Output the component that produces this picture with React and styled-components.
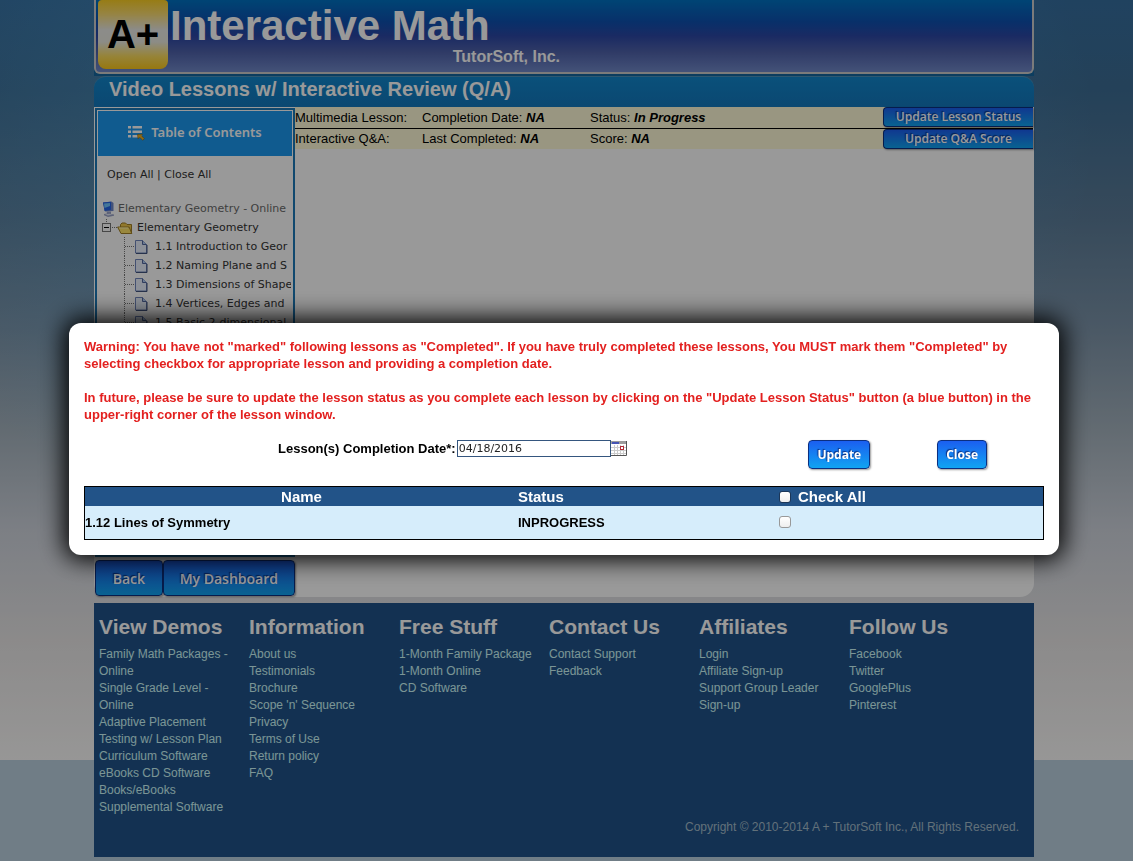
import React from 'react';
import styled, { createGlobalStyle } from 'styled-components';

const GlobalStyle = createGlobalStyle
`
  * {
    box-sizing: border-box;
  }
  html {
    background: #bbd0df;
  }
  body {
    margin: 0;
    font-family: "Liberation Sans", Arial, sans-serif;
    color: #000;
  }
  a {
    color: inherit;
    text-decoration: none;
  }
  ul {
    list-style: none;
    margin: 0;
    padding: 0;
  }
`

const Page = styled.div
`
  min-height: 100vh;
  padding: 0 5px 4px 0;
  background:
    radial-gradient(ellipse 620px 460px at 42% 130px, rgba(90, 190, 245, 0.5), rgba(90, 190, 245, 0)) no-repeat 0 0 / 100% 760px,
    linear-gradient(#366e9f 0, #3d6d94 90px, #5c7c98 220px, #7d94a9 330px, #a5b3be 430px, #cfd4dd 530px, #e9e7e7 640px, #fcfbfa 760px) no-repeat 0 0 / 100% 760px,
    #bbd0df;
`
const Wrap = styled.div
`
  width: 100%;
  max-width: 940px;
  margin: 0 auto;
`
const Top = styled.div
`
  background: #14679f;
  padding-bottom: 2px;
`
const Banner = styled.header
`
  display: flex;
  height: 74px;
  padding-left: 2px;
  border: 2px solid #cecece;
  border-top: none;
  border-radius: 0 0 6px 6px;
  background: linear-gradient(#0072c2 0, #0e50b0 22px, #2c47a5 36px, #4f62aa 52px, #7189c9 72px);
`
const Logo = styled.div
`
  width: 70px;
  height: 69px;
  border-radius: 4px 4px 8px 8px;
  background: linear-gradient(#fccf24 0, #fbdc70 14px, #e9e9e5 30px, #e9e9e0 42px, #fbdc60 56px, #fcc81c 69px);
  text-align: center;
  font-size: 40px;
  font-weight: bold;
  line-height: 69px;
`
const Brand = styled.div
`
  padding: 3px 0 0 2px;
  width: 394px;
  color: #fff;
  font-weight: bold;
`
const BrandName = styled.h1
`
  margin: 0;
  font-size: 42px;
  line-height: 46px;
  white-space: nowrap;
`
const Company = styled.p
`
  margin: 0;
  padding-right: 2px;
  font-size: 16px;
  line-height: 16px;
  text-align: right;
`
const TitleBar = styled.h2
`
  margin: 0;
  height: 31px;
  padding-left: 15px;
  border-top: 1px solid #4c93bd;
  border-radius: 12px 12px 0 0;
  background: linear-gradient(#1186cc, #1378bd);
  color: #fff;
  font-size: 20px;
  line-height: 24px;
`
const Content = styled.div
`
  display: flex;
  min-height: 490px;
  padding: 1px;
  border-radius: 0 0 14px 14px;
  background: #fff;
`
const Side = styled.aside
`
  flex: 0 0 200px;
  min-width: 0;
`
const TocPanel = styled.div
`
  height: 449px;
  border: 2px solid #1b79b8;
  overflow: hidden;
`
const TocHead = styled.div
`
  display: flex;
  align-items: center;
  justify-content: center;
  gap: 6px;
  height: 45px;
  margin: 1px 0 0 1px;
  padding-bottom: 3px;
  border-right: 1px solid #fff;
  background: #1c98ef;
  color: #fff;
  font-family: "Noto Sans", "Open Sans", sans-serif;
  font-size: 13px;
  font-weight: 600;
`
const Tree = styled.nav
`
  margin: 0 2px 0 1px;
  padding: 9px 0 0 4px;
  overflow: hidden;
  color: #333;
  font-family: "DejaVu Sans", Verdana, sans-serif;
  font-size: 11px;
  line-height: 19px;
  white-space: nowrap;
`
const TreeTools = styled.div
`
  margin: 0 0 15px 5px;
`
const TreeRow = styled.div
`
  display: flex;
  align-items: center;
  height: 19px;
  color: ${props => props.$muted ? '#6a6a6a' : '#333'};
  svg{
    flex: none;
    margin-right: ${props => props.$gap}px;
  }
`
const Leaves = styled.ul
`
  padding-left: 22px;
`
const Main = styled.main
`
  flex: 1;
  min-width: 0;
`
const StatusTable = styled.table
`
  width: 100%;
  margin-top: -1px;
  border-collapse: collapse;
  table-layout: fixed;
  font-size: 13px;
  tr{
    height: 21px;
  }
  tr + tr td{
    border-top: 1px solid #000;
  }
  td{
    padding: 0;
    background: #fffbd8;
    white-space: nowrap;
  }
`
const Col = styled.col
`
  width: ${props => props.$w};
`
const BlueButton = styled.button
`
  padding: 0;
  border: 1px solid #0b2f80;
  border-radius: 4px;
  background: linear-gradient(#1b5ff0, #10a4f2);
  box-shadow: 1px 1px 2px rgba(0, 0, 0, 0.4);
  color: #fff;
  font-family: "Open Sans", "Noto Sans", sans-serif;
  font-weight: 600;
  text-shadow: -1px -1px 1px #0b2f80;
`
const RowButton = styled(BlueButton)
`
  display: block;
  width: 100%;
  height: 20px;
  border-right: none;
  border-radius: 4px 0 0 4px;
  font-size: 12px;
  line-height: 18px;
`
const SideButtons = styled.div
`
  display: flex;
  margin-top: 3px;
`
const BigButton = styled(BlueButton)
`
  flex: ${props => props.$grow} 0 0;
  height: 36px;
  font-size: 14px;
`
const SmallButton = styled(BlueButton)
`
  height: 29px;
  padding: 0 8px;
  font-size: 12px;
  font-weight: bold;
`
const Footer = styled.footer
`
  min-height: 254px;
  margin-top: 6px;
  padding: 12px 15px 0 5px;
  background: #215389;
`
const FooterCols = styled.div
`
  display: grid;
  grid-template-columns: repeat(6, 150px);
  min-height: 204px;
`
const FooterCol = styled.div
`
  padding-right: 15px;
  color: #cdf8f8;
  font-size: 12px;
  line-height: 17px;
  h3{
    margin: 0 0 8px;
    color: #fff;
    font-size: 21px;
    line-height: 23px;
    white-space: nowrap;
  }
  li a{
    display: block;
  }
`
const Copyright = styled.p
`
  margin: 0;
  color: #a4bccb;
  font-size: 12px;
  line-height: 17px;
  text-align: right;
`
const Overlay = styled.div
`
  position: fixed;
  inset: 0;
  display: flex;
  align-items: center;
  justify-content: center;
  padding: 17px 5px 0 0;
  background: rgba(0, 0, 0, 0.4);
`
const Dialog = styled.section
`
  width: 100%;
  max-width: 990px;
  padding: 15px;
  border-radius: 12px;
  background: #fff;
  box-shadow: 0 0 25px 5px #000;
  font-size: 13px;
  font-weight: bold;
`
const Warning = styled.p
`
  margin: 0 0 17px;
  color: #e3201f;
  line-height: 17px;
`
const DateForm = styled.div
`
  display: flex;
  align-items: flex-start;
  padding: 0 57px 17px 194px;
  label{
    margin-right: 1px;
    line-height: 17px;
  }
`
const DateInput = styled.input
`
  width: 154px;
  height: 17px;
  padding: 0 1px;
  border: 1px solid #35567f;
  border-radius: 0;
  font-family: "DejaVu Sans", Verdana, sans-serif;
  font-size: 11px;
  color: #222;
`
const IconButton = styled.button
`
  margin-top: 1px;
  padding: 0;
  border: none;
  background: none;
  line-height: 0;
`
const Actions = styled.div
`
  display: flex;
  gap: 67px;
  margin-left: auto;
`
const LessonTable = styled.table
`
  width: 100%;
  border: 1px solid #000;
  border-spacing: 0;
  table-layout: fixed;
  th, td{
    padding: 0;
    text-align: left;
  }
  th{
    height: 19px;
    background: #225388;
    color: #fff;
    font-size: 15px;
    line-height: 18px;
  }
  th:first-child{
    text-align: center;
  }
  td{
    height: 33px;
    background: #d6edfb;
  }
`
const Check = styled.input
`
  appearance: none;
  width: 12px;
  height: 12px;
  margin: 0 7px 0 0;
  border: 1px solid ${props => props.$dark ? '#1b3658' : '#999'};
  border-radius: 3px;
  background: linear-gradient(#fff, #eee);
  vertical-align: -1px;
`

const ListIcon = () => (
  <svg width="17" height="17" viewBox="0 0 17 17" aria-hidden="true">
    <path d="M0 2h3v2.500H0zM4.500 2H14v2.500H4.500zM0 6.500h3V9H0zM4.500 6.500H14V9H4.500zM0 11h3v2.500H0zM4.500 11H14v2.500H4.500z" fill="#fff" />
    <path d="M9.500 10.500l5-.5-1.200 1.500 3 3.200-1.600 1.600-3.100-3.100-1.500 1.600z" fill="#f2b31e" stroke="#80601a" strokeWidth=".6" />
  </svg>
)

const ComputerIcon = () => (
  <svg width="13" height="16" viewBox="0 0 13 16" aria-hidden="true">
    <path d="M1 1.500L9.500.5 11.500 2v8L3 10.500z" fill="#6f87cc" />
    <path d="M1 1.500l8-.8v8L2.500 10z" fill="#2564e8" />
    <path d="M2 2.500l6-.6v3L2.500 7z" fill="#72c6ff" />
    <path d="M4.500 10.500H9V13l3 .5v1.200L6 16l-4-1.800V13l3-.6z" fill="#9ba4c8" />
    <path d="M3 13.300l5-.6 2.500.8-4.500.9z" fill="#dfe4f5" />
  </svg>
)

const MinusIcon = () => (
  <svg width="15" height="19" viewBox="0 0 15 19" aria-hidden="true">
    <path d="M4.500 1v4M10 9.500h5" stroke="#777" strokeDasharray="1 1" fill="none" />
    <rect x=".5" y="5.500" width="8" height="8" fill="#fff" stroke="#777" />
    <path d="M2 9.500h5" stroke="#000" />
  </svg>
)

const FolderIcon = () => (
  <svg width="16" height="14" viewBox="0 0 16 14" aria-hidden="true">
    <path d="M3.500 6V3.500L5 2h3.500L10 3.500h4.500v9H5z" fill="#f0c94a" stroke="#a17f27" />
    <path d="M.6 6h11.500l2.700 6.500H4z" fill="#ffe368" stroke="#a17f27" />
    <path d="M2 7h9" stroke="#fff3ad" />
  </svg>
)

const LeafIcon = () => (
  <svg width="25" height="19" viewBox="0 0 25 19" aria-hidden="true">
    <path d="M.5 0v19M1 9.500h10" stroke="#777" strokeDasharray="1 1" fill="none" />
    <path d="M11.500 3.500h7l4 4v8.500h-11z" fill="#e9f1fd" stroke="#7186bd" />
    <path d="M18.500 3.500v4h4" fill="#b3cdf4" stroke="#52679d" />
    <path d="M12 16.500h11V8" stroke="#42547f" fill="none" />
  </svg>
)

const CalendarIcon = () => (
  <svg width="16" height="15" viewBox="0 0 16 15" aria-hidden="true">
    <path d="M0 0h16v15H0z" fill="#fff" />
    <path d="M0 0h16v3H0z" fill="#9c9c9c" />
    <path d="M1 1h7v2H1z" fill="#4655b5" />
    <path d="M0 6.500h15M0 9.500h15M0 12.500h15M3.500 4v10M6.500 4v10M9.500 4v10M12.500 4v10" stroke="#ccc" />
    <path d="M15.500 0v14.500H0" stroke="#555" fill="none" />
    <rect x="9.500" y="5.500" width="3" height="3" fill="#fff" stroke="#b32b35" />
  </svg>
)

const lessons = [
  '1.1 Introduction to Geor',
  '1.2 Naming Plane and S',
  '1.3 Dimensions of Shape',
  '1.4 Vertices, Edges and',
  '1.5 Basic 2-dimensional',
]

const footer = [
  ['View Demos', ['Family Math Packages - Online', 'Single Grade Level - Online', 'Adaptive Placement Testing w/ Lesson Plan', 'Curriculum Software', 'eBooks CD Software', 'Books/eBooks Supplemental Software']],
  ['Information', ['About us', 'Testimonials', 'Brochure', "Scope 'n' Sequence", 'Privacy', 'Terms of Use', 'Return policy', 'FAQ']],
  ['Free Stuff', ['1-Month Family Package', '1-Month Online', 'CD Software']],
  ['Contact Us', ['Contact Support', 'Feedback']],
  ['Affiliates', ['Login', 'Affiliate Sign-up', 'Support Group Leader Sign-up']],
  ['Follow Us', ['Facebook', 'Twitter', 'GooglePlus', 'Pinterest']],
]

class App extends React.Component {
  render() {
    return (
      <>
        <GlobalStyle />
        <Page>
          <Wrap>
            <Top>
              <Banner>
                <Logo>A+</Logo>
                <Brand>
                  <BrandName>Interactive Math</BrandName>
                  <Company>TutorSoft, Inc.</Company>
                </Brand>
              </Banner>
            </Top>
            <TitleBar>Video Lessons w/ Interactive Review (Q/A)</TitleBar>

            <Content>
              <Side>
                <TocPanel>
                  <TocHead><ListIcon />Table of Contents</TocHead>
                  <Tree>
                    <TreeTools><a href="#open">Open All</a> | <a href="#close">Close All</a></TreeTools>
                    <TreeRow $muted $gap={3}><ComputerIcon />Elementary Geometry - Online</TreeRow>
                    <TreeRow $gap={0}>
                      <MinusIcon />
                      <TreeRow $gap={4}><FolderIcon /><a href="#geometry">Elementary Geometry</a></TreeRow>
                    </TreeRow>
                    <Leaves>
                      {lessons.map(name => (
                        <li key={name}>
                          <TreeRow $gap={6}><LeafIcon /><a href="#lesson">{name}</a></TreeRow>
                        </li>
                      ))}
                    </Leaves>
                  </Tree>
                </TocPanel>
                <SideButtons>
                  <BigButton $grow={67}>Back</BigButton>
                  <BigButton $grow={133}>My Dashboard</BigButton>
                </SideButtons>
              </Side>

              <Main>
                <StatusTable>
                  <colgroup>
                    <Col $w="127px" />
                    <Col $w="168px" />
                    <Col />
                    <Col $w="150px" />
                  </colgroup>
                  <tbody>
                    <tr>
                      <td>Multimedia Lesson:</td>
                      <td>Completion Date: <b><i>NA</i></b></td>
                      <td>Status: <b><i>In Progress</i></b></td>
                      <td><RowButton>Update Lesson Status</RowButton></td>
                    </tr>
                    <tr>
                      <td>Interactive Q&amp;A:</td>
                      <td>Last Completed: <b><i>NA</i></b></td>
                      <td>Score: <b><i>NA</i></b></td>
                      <td><RowButton>Update Q&amp;A Score</RowButton></td>
                    </tr>
                  </tbody>
                </StatusTable>
              </Main>
            </Content>

            <Footer>
              <FooterCols>
                {footer.map(([title, links]) => (
                  <FooterCol key={title}>
                    <h3>{title}</h3>
                    <ul>
                      {links.map(link => <li key={link}><a href="#link">{link}</a></li>)}
                    </ul>
                  </FooterCol>
                ))}
              </FooterCols>
              <Copyright>Copyright © 2010-2014 A + TutorSoft Inc., All Rights Reserved.</Copyright>
            </Footer>
          </Wrap>
        </Page>

        <Overlay>
          <Dialog role="dialog" aria-modal="true">
            <Warning>
              Warning: You have not "marked" following lessons as "Completed". If you have truly completed these lessons, You MUST mark them "Completed" by selecting checkbox for appropriate lesson and providing a completion date.
            </Warning>
            <Warning>
              In future, please be sure to update the lesson status as you complete each lesson by clicking on the "Update Lesson Status" button (a blue button) in the upper-right corner of the lesson window.
            </Warning>
            <DateForm>
              <label htmlFor="date">Lesson(s) Completion Date*:</label>
              <DateInput id="date" type="text" defaultValue="04/18/2016" />
              <IconButton type="button" aria-label="Pick a date"><CalendarIcon /></IconButton>
              <Actions>
                <SmallButton type="button">Update</SmallButton>
                <SmallButton type="button">Close</SmallButton>
              </Actions>
            </DateForm>
            <LessonTable>
              <colgroup>
                <Col $w="433px" />
                <Col $w="261px" />
                <Col />
              </colgroup>
              <thead>
                <tr>
                  <th>Name</th>
                  <th>Status</th>
                  <th><Check $dark type="checkbox" id="all" /><label htmlFor="all">Check All</label></th>
                </tr>
              </thead>
              <tbody>
                <tr>
                  <td>1.12 Lines of Symmetry</td>
                  <td>INPROGRESS</td>
                  <td><Check type="checkbox" aria-label="1.12 Lines of Symmetry" /></td>
                </tr>
              </tbody>
            </LessonTable>
          </Dialog>
        </Overlay>
      </>
    );
  }
}

export default App;
